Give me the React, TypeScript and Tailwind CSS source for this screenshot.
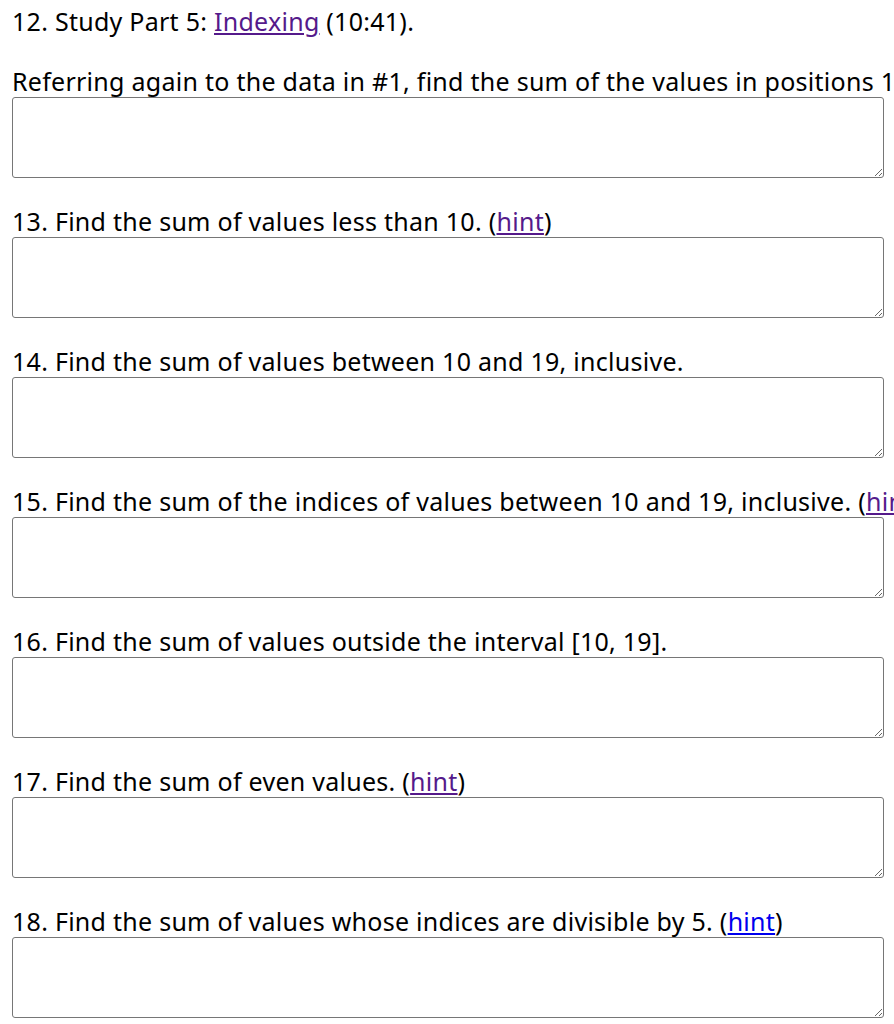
const questions: { text: string; hint?: "visited" | "new" }[] = [
  { text: "13. Find the sum of values less than 10.", hint: "visited" },
  { text: "14. Find the sum of values between 10 and 19, inclusive." },
  {
    text: "15. Find the sum of the indices of values between 10 and 19, inclusive.",
    hint: "visited",
  },
  { text: "16. Find the sum of values outside the interval [10, 19]." },
  { text: "17. Find the sum of even values.", hint: "visited" },
  { text: "18. Find the sum of values whose indices are divisible by 5.", hint: "new" },
];

const Answer = () => (
  <textarea className="block w-[872px] h-[81px] border border-[#767676] rounded-[3px] bg-white resize" />
);

export default function App() {
  return (
    <div
      className="w-[894px] h-[1024px] overflow-hidden bg-white text-black pl-[12px] pt-[5px] text-[25px] leading-[32px] tracking-[0.27px] whitespace-nowrap"
      style={{ fontFamily: '"Noto Sans", "Open Sans", sans-serif' }}
    >
      <p>
        12. Study Part 5:{" "}
        <a href="#" className="underline text-[#551a8b]">
          Indexing
        </a>{" "}
        (10:41).
      </p>
      <p className="mt-[28px]">
        Referring again to the data in #1, find the sum of the values in positions 10 through 20.
      </p>
      <Answer />
      {questions.map((q) => (
        <div key={q.text} className="mt-[27px]">
          <p>
            {q.text}
            {q.hint && (
              <>
                {" "}(
                <a
                  href="#"
                  className={q.hint === "new" ? "underline text-[#0000ee]" : "underline text-[#551a8b]"}
                >
                  hint
                </a>
                )
              </>
            )}
          </p>
          <Answer />
        </div>
      ))}
    </div>
  );
}
